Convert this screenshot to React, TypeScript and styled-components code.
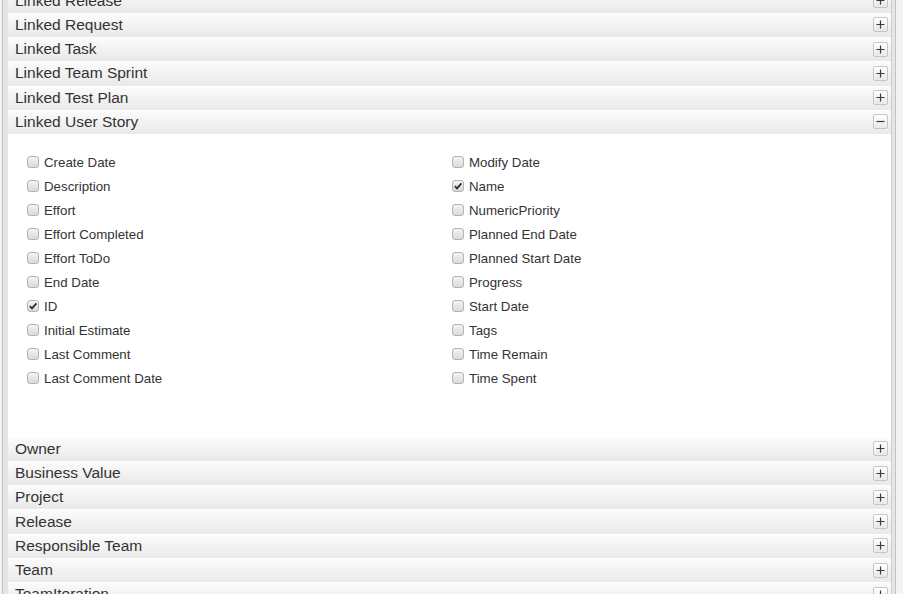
import React from "react";
import styled, { createGlobalStyle } from "styled-components";

const GlobalStyle = createGlobalStyle`
  html, body {
    margin: 0;
    padding: 0;
    background: #f3f3f3;
    overflow: hidden;
  }
  body {
    font-family: "Liberation Sans", Arial, sans-serif;
  }
`;

interface ISection {
  title: string;
  open?: boolean;
}

const topSections: ISection[] = [
  { title: "Linked Release" },
  { title: "Linked Request" },
  { title: "Linked Task" },
  { title: "Linked Team Sprint" },
  { title: "Linked Test Plan" },
  { title: "Linked User Story", open: true },
];

const bottomSections: ISection[] = [
  { title: "Owner" },
  { title: "Business Value" },
  { title: "Project" },
  { title: "Release" },
  { title: "Responsible Team" },
  { title: "Team" },
  { title: "TeamIteration" },
];

const fields: Array<{ label: string; checked?: boolean }> = [
  { label: "Create Date" },
  { label: "Description" },
  { label: "Effort" },
  { label: "Effort Completed" },
  { label: "Effort ToDo" },
  { label: "End Date" },
  { label: "ID", checked: true },
  { label: "Initial Estimate" },
  { label: "Last Comment" },
  { label: "Last Comment Date" },
  { label: "Modify Date" },
  { label: "Name", checked: true },
  { label: "NumericPriority" },
  { label: "Planned End Date" },
  { label: "Planned Start Date" },
  { label: "Progress" },
  { label: "Start Date" },
  { label: "Tags" },
  { label: "Time Remain" },
  { label: "Time Spent" },
];

const ToggleIcon: React.FC<{ open?: boolean }> = ({ open }) => (
  <svg width="9" height="9" viewBox="0 0 9 9">
    <path
      d={open ? "M0.5 4.5H8.5" : "M0.5 4.5H8.5M4.5 0.5V8.5"}
      stroke="#3a3a3a"
      strokeWidth="1.2"
      fill="none"
    />
  </svg>
);

const CheckMark = () => (
  <svg width="10" height="10" viewBox="0 0 10 10">
    <path
      d="M1.8 5.2L4 7.4L8.4 2.4"
      stroke="#2e2e2e"
      strokeWidth="1.8"
      fill="none"
    />
  </svg>
);

const Header: React.FC<ISection> = ({ title, open }) => (
  <SectionHeader>
    <span>{title}</span>
    <ToggleButton>
      <ToggleIcon open={open} />
    </ToggleButton>
  </SectionHeader>
);

export default function App() {
  return (
    <>
      <GlobalStyle />
      <Outer>
        <Frame>
          <Content>
            {topSections.map((s) => (
              <React.Fragment key={s.title}>
                <Header {...s} />
                {s.open && (
                  <SectionBody>
                    <FieldGrid>
                      {fields.map((f) => (
                        <Field key={f.label}>
                          <Box>{f.checked && <CheckMark />}</Box>
                          {f.label}
                        </Field>
                      ))}
                    </FieldGrid>
                  </SectionBody>
                )}
              </React.Fragment>
            ))}
            {bottomSections.map((s) => (
              <Header key={s.title} {...s} />
            ))}
          </Content>
        </Frame>
      </Outer>
    </>
  );
}

const Outer = styled.div`
  height: 100vh;
  box-sizing: border-box;
  padding: 0 7px 0 2px;
  background: #f3f3f3;
  overflow: hidden;
`;

const Frame = styled.div`
  height: 100%;
  box-sizing: border-box;
  border-left: 1px solid #c2c2c2;
  border-right: 1px solid #c2c2c2;
  background: #e5e5e5;
  padding: 0 3px 0 5px;
  overflow: hidden;
`;

const Content = styled.div`
  margin-top: -11.5px;
  background: #ffffff;
  border-right: 1px solid #cfcfcf;
`;

const SectionHeader = styled.div`
  height: 24.25px;
  box-sizing: border-box;
  border-top: 1px solid #ffffff;
  background: linear-gradient(#fbfbfb, #e9e9e9);
  display: flex;
  align-items: center;
  justify-content: space-between;
  padding: 0 3px 1px 7px;
  font-size: 15.5px;
  color: #333333;
  white-space: nowrap;
`;

const ToggleButton = styled.span`
  width: 15px;
  height: 15px;
  box-sizing: border-box;
  border: 1px solid #c6c6c6;
  border-radius: 2px;
  background: linear-gradient(#ffffff, #e8e8e8);
  display: flex;
  align-items: center;
  justify-content: center;
`;

const SectionBody = styled.div`
  background: #ffffff;
  padding: 16px 0 46.7px 19px;
`;

const FieldGrid = styled.div`
  display: grid;
  grid-template-columns: 425px 1fr;
  grid-template-rows: repeat(10, 24px);
  grid-auto-flow: column;
`;

const Field = styled.label`
  display: flex;
  align-items: center;
  font-size: 13.3px;
  color: #333333;
  white-space: nowrap;
`;

const Box = styled.span`
  width: 12px;
  height: 12px;
  box-sizing: border-box;
  border: 1px solid #b3b3b3;
  border-radius: 3px;
  background: linear-gradient(#f4f4f4, #dadada);
  margin-right: 5px;
  display: flex;
  align-items: center;
  justify-content: center;
`;
